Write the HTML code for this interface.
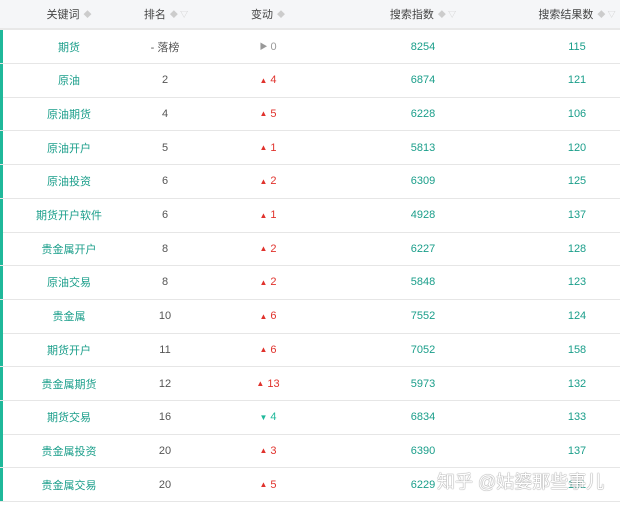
<!DOCTYPE html><html><head><meta charset="utf-8"><style>
body{margin:0;width:620px;height:505px;overflow:hidden;background:#fff;font-family:"Liberation Sans","Noto Sans CJK SC",sans-serif;font-size:11px;position:relative}
.h{position:absolute;top:0;left:0;width:620px;height:28px;background:#f5f6f8;border-bottom:2px solid #e8e8e8}
.r{position:absolute;left:0;width:620px;height:33px;border-bottom:1px solid #e6e6e6}
.r:before{content:"";position:absolute;left:0;top:0;width:3px;height:100%;background:#1fb89a}
.c{position:absolute;top:0;height:100%;display:flex;align-items:center;justify-content:center;transform:translateX(-50%);white-space:nowrap}
.h .c{color:#444}
.k{color:#1a9e8a}.n{color:#555}.g{color:#1a9e8a}
.up{color:#e0322c}.dn{color:#1fb89a}.z{color:#999}
.a{font-size:8px;margin-right:3px}
.s{color:#ccc;font-size:8px;margin-left:4px}
.wm{position:absolute;left:437px;top:468px;font-size:18px;font-weight:normal;white-space:nowrap;color:#fff;text-shadow:0 0 1px #888,0 0 1px #888;letter-spacing:0}
</style></head><body>
<div class="h">
<div class="c" style="left:69px">关键词<span class="s">◆</span></div>
<div class="c" style="left:166px">排名<span class="s">◆ ▽</span></div>
<div class="c" style="left:268px">变动<span class="s">◆</span></div>
<div class="c" style="left:423px">搜索指数<span class="s">◆ ▽</span></div>
<div class="c" style="left:577px">搜索结果数<span class="s">◆ ▽</span></div>
</div>
<div id="t"></div>
<script>
var d=[["期货","- 落榜","z","▶","0","8254","115"],["原油","2","up","▲","4","6874","121"],["原油期货","4","up","▲","5","6228","106"],["原油开户","5","up","▲","1","5813","120"],["原油投资","6","up","▲","2","6309","125"],["期货开户软件","6","up","▲","1","4928","137"],["贵金属开户","8","up","▲","2","6227","128"],["原油交易","8","up","▲","2","5848","123"],["贵金属","10","up","▲","6","7552","124"],["期货开户","11","up","▲","6","7052","158"],["贵金属期货","12","up","▲","13","5973","132"],["期货交易","16","dn","▼","4","6834","133"],["贵金属投资","20","up","▲","3","6390","137"],["贵金属交易","20","up","▲","5","6229","131"]];
var h="";d.forEach(function(x,i){h+='<div class="r" style="top:'+(30+i*33.7)+'px"><div class="c k" style="left:69px">'+x[0]+'</div><div class="c n" style="left:165px">'+x[1]+'</div><div class="c '+x[2]+'" style="left:268px"><span class="a">'+x[3]+'</span>'+x[4]+'</div><div class="c g" style="left:423px">'+x[5]+'</div><div class="c g" style="left:577px">'+x[6]+'</div></div>'});
document.getElementById("t").innerHTML=h;
</script>
<div class="wm">知乎 @姑婆那些事儿</div>
</body></html>
